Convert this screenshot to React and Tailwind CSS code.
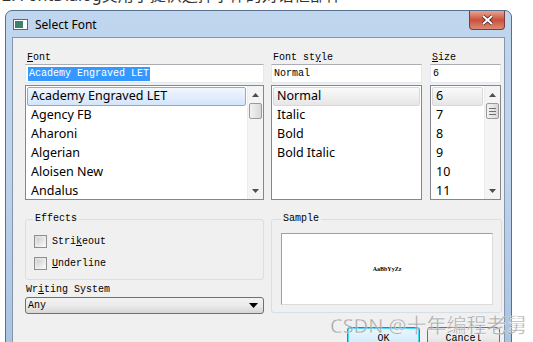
import React from "react";

const mono = { fontFamily: '"Liberation Mono", "DejaVu Sans Mono", monospace' };
const ui = { fontFamily: '"Noto Sans", "Open Sans", sans-serif' };

const fonts = ["Academy Engraved LET", "Agency FB", "Aharoni", "Algerian", "Aloisen New", "Andalus"];
const styles = ["Normal", "Italic", "Bold", "Bold Italic"];
const sizes = ["6", "7", "8", "9", "10", "11"];

function UpArrow() {
  return (
    <svg width="7" height="4" viewBox="0 0 7 4">
      <path d="M0 4 L3.5 0 L7 4 Z" fill="#4d4d4d" />
    </svg>
  );
}

function DownArrow() {
  return (
    <svg width="7" height="4" viewBox="0 0 7 4">
      <path d="M0 0 L3.5 4 L7 0 Z" fill="#4d4d4d" />
    </svg>
  );
}

function ScrollBar({ grip }) {
  return (
    <div className="w-[16px] h-full flex flex-col bg-[#f4f4f4] border-l border-[#ececec]">
      <div className="h-[17px] flex items-center justify-center">
        <UpArrow />
      </div>
      <div className="mx-[1px] h-[16px] rounded-[2px] border border-[#9a9a9a] bg-gradient-to-r from-[#f3f3f3] to-[#d8d8d8] flex flex-col items-center justify-center gap-[2px]">
        {grip && (
          <>
            <div className="w-[7px] h-px bg-[#6f6f6f]" />
            <div className="w-[7px] h-px bg-[#6f6f6f]" />
            <div className="w-[7px] h-px bg-[#6f6f6f]" />
          </>
        )}
      </div>
      <div className="flex-1" />
      <div className="h-[17px] flex items-center justify-center">
        <DownArrow />
      </div>
    </div>
  );
}

function ListBox({ items, focused, scroll, grip }) {
  return (
    <div className="mt-[2px] h-[115px] border border-[#828790] bg-white flex overflow-hidden">
      <div className="flex-1 pt-[1px] px-[1px]">
        {items.map((it, i) => (
          <div
            key={it}
            className={
              "h-[19px] flex items-center pl-[3px] text-[12.5px] text-black leading-none " +
              (i === 0
                ? focused
                  ? "rounded-[2px] border border-[#84acdd] bg-gradient-to-b from-[#f1f7fe] to-[#d3e5fa]"
                  : "rounded-[2px] border border-[#d9d9d9] bg-gradient-to-b from-[#fafafa] to-[#e6e6e6]"
                : "border border-transparent")
            }
            style={ui}
          >
            {it}
          </div>
        ))}
      </div>
      {scroll && <ScrollBar grip={grip} />}
    </div>
  );
}

function Edit({ children }) {
  return (
    <div className="h-[19px] border border-[#e3e9ef] border-t-[#abadb3] bg-white flex items-center pl-[2px] text-[10px] text-black" style={mono}>
      {children}
    </div>
  );
}

function Label({ children }) {
  return (
    <div className="h-[13px] text-[10px] leading-[13px] text-black pl-[2px]" style={mono}>
      {children}
    </div>
  );
}

function Check({ children }) {
  return (
    <div className="flex items-center gap-[5px] h-[13px]">
      <div className="w-[13px] h-[13px] border border-[#8f8f8f] bg-gradient-to-br from-[#dcdcdc] to-[#f8f8f8] p-[2px]">
        <div className="w-full h-full bg-gradient-to-br from-[#cfcfcf] to-[#f4f4f4]" />
      </div>
      <span className="text-[10px] text-black" style={mono}>
        {children}
      </span>
    </div>
  );
}

export default function App() {
  return (
    <div className="w-[533px] h-[342px] bg-white overflow-hidden relative">
      {/* cut-off line of the article above */}
      <div className="h-[10px] overflow-hidden">
        <div
          className="mt-[-15px] pl-[2px] text-[16px] leading-[20px] text-[#333] whitespace-nowrap"
          style={{ fontFamily: '"Noto Sans", "Noto Sans CJK SC", sans-serif' }}
        >
          2. FontDialog类用于提供选择字体的对话框部件
        </div>
      </div>

      {/* window */}
      <div className="ml-[5px] w-[507px] h-[340px] rounded-t-[7px] border border-[#56708f] bg-gradient-to-b from-[#c0d6ee] via-[#bdd3ec] to-[#a9c3e3] flex flex-col">
        {/* title bar */}
        <div className="h-[26px] shrink-0 flex items-start relative">
          <div className="flex items-center h-[27px] pl-[7px] gap-[7px]">
            <div className="w-[15px] h-[11px] border border-[#5c6770] bg-white flex items-end p-[1px]">
              <div className="w-[8px] h-[7px] bg-[#3f7f6c]" />
            </div>
            <span className="text-[12px] text-black" style={ui}>
              Select Font
            </span>
          </div>
          <div className="flex-1" />
          <div className="mr-[6px] w-[36px] h-[19px] rounded-b-[4px] border border-t-0 border-[#7d3b3b] bg-gradient-to-b from-[#e8a493] via-[#c9503a] to-[#d98a76] flex items-center justify-center">
            <svg width="11" height="10" viewBox="0 0 11 10">
              <path d="M1 1 L10 9 M10 1 L1 9" stroke="#4a1f1f" strokeWidth="3.4" />
              <path d="M1 1 L10 9 M10 1 L1 9" stroke="#ffffff" strokeWidth="2" />
            </svg>
          </div>
        </div>

        {/* client area */}
        <div className="ml-[6px] w-[493px] flex-1 border border-[#8596ab] bg-[#f0f0f0] pl-[12px] pr-[3px] pt-[13px]">
          <div className="flex">
            <div className="w-[239px] shrink-0">
              <Label>
                <span className="underline">F</span>ont
              </Label>
              <Edit>
                <span className="bg-[#3399ff] text-white leading-[14px] px-px">Academy Engraved LET</span>
              </Edit>
              <ListBox items={fonts} focused scroll />
            </div>
            <div className="w-[151px] shrink-0 ml-[7px]">
              <Label>
                Font st<span className="underline">y</span>le
              </Label>
              <Edit>Normal</Edit>
              <ListBox items={styles} />
            </div>
            <div className="w-[71px] shrink-0 ml-[8px]">
              <Label>
                <span className="underline">S</span>ize
              </Label>
              <Edit>6</Edit>
              <ListBox items={sizes} scroll grip />
            </div>
          </div>

          <div className="flex mt-[14px]">
            <div className="w-[239px] shrink-0 flex flex-col">
              <fieldset className="h-[66px] border border-[#d5dfe5] rounded-[3px] px-[8px] pb-[6px]">
                <legend className="ml-[-1px] px-[2px] text-[10px] leading-[10px] text-black" style={mono}>
                  Effects
                </legend>
                <div className="flex flex-col gap-[9px] pt-[11px]">
                  <Check>
                    Stri<span className="underline">k</span>eout
                  </Check>
                  <Check>
                    <span className="underline">U</span>nderline
                  </Check>
                </div>
              </fieldset>
              <div className="mt-[3px]">
                <div className="h-[13px] text-[10px] leading-[13px] text-black pl-[1px]" style={mono}>
                  Wr<span className="underline">i</span>ting System
                </div>
              </div>
              <div className="mt-[1px] h-[17px] rounded-[3px] border border-[#707070] bg-gradient-to-b from-[#f2f2f2] via-[#ebebeb] to-[#d6d6d6] flex items-center pl-[2px] pr-[5px]">
                <span className="flex-1 text-[10px] text-black" style={mono}>
                  Any
                </span>
                <svg width="9" height="5" viewBox="0 0 9 5">
                  <path d="M0 0 L9 0 L4.5 5 Z" fill="#000" />
                </svg>
              </div>
            </div>
            <div className="w-[231px] shrink-0 ml-[7px]">
              <fieldset className="h-[99px] border border-[#d5dfe5] rounded-[3px] pl-[9px] pr-[8px] pb-[8px]">
                <legend className="ml-0 px-[2px] text-[10px] leading-[10px] text-black" style={mono}>
                  Sample
                </legend>
                <div className="mt-[9px] h-[72px] border border-[#dcdcdc] border-t-[#a0a0a0] border-l-[#a0a0a0] bg-white flex items-center justify-center">
                  <span className="text-[6px] font-bold text-black" style={{ fontFamily: '"Liberation Serif", serif' }}>
                    AaBbYyZz
                  </span>
                </div>
              </fieldset>
            </div>
          </div>

          <div className="flex justify-end gap-[7px] mt-[13px] pr-px">
            <div className="w-[73px] h-[23px] rounded-[3px] border border-[#3c7fb1] bg-gradient-to-b from-[#eaf6fd] via-[#d9f0fc] to-[#bee6fd] shadow-[inset_0_0_0_1px_#48d9ff] flex items-center justify-center text-[10px] text-black" style={mono}>
              OK
            </div>
            <div className="w-[73px] h-[23px] rounded-[3px] border border-[#707070] bg-gradient-to-b from-[#f2f2f2] via-[#ebebeb] to-[#cfcfcf] flex items-center justify-center text-[10px] text-black" style={mono}>
              Cancel
            </div>
          </div>
        </div>
      </div>

      {/* watermark */}
      <div
        className="absolute left-[330px] top-[311px] text-[20px] text-[#8f8f8f]/75 whitespace-nowrap"
        style={{ fontFamily: '"Noto Sans", "Noto Sans CJK SC", sans-serif', WebkitTextStroke: "0.3px #ffffff" }}
      >
        CSDN @十年编程老舅
      </div>
    </div>
  );
}
